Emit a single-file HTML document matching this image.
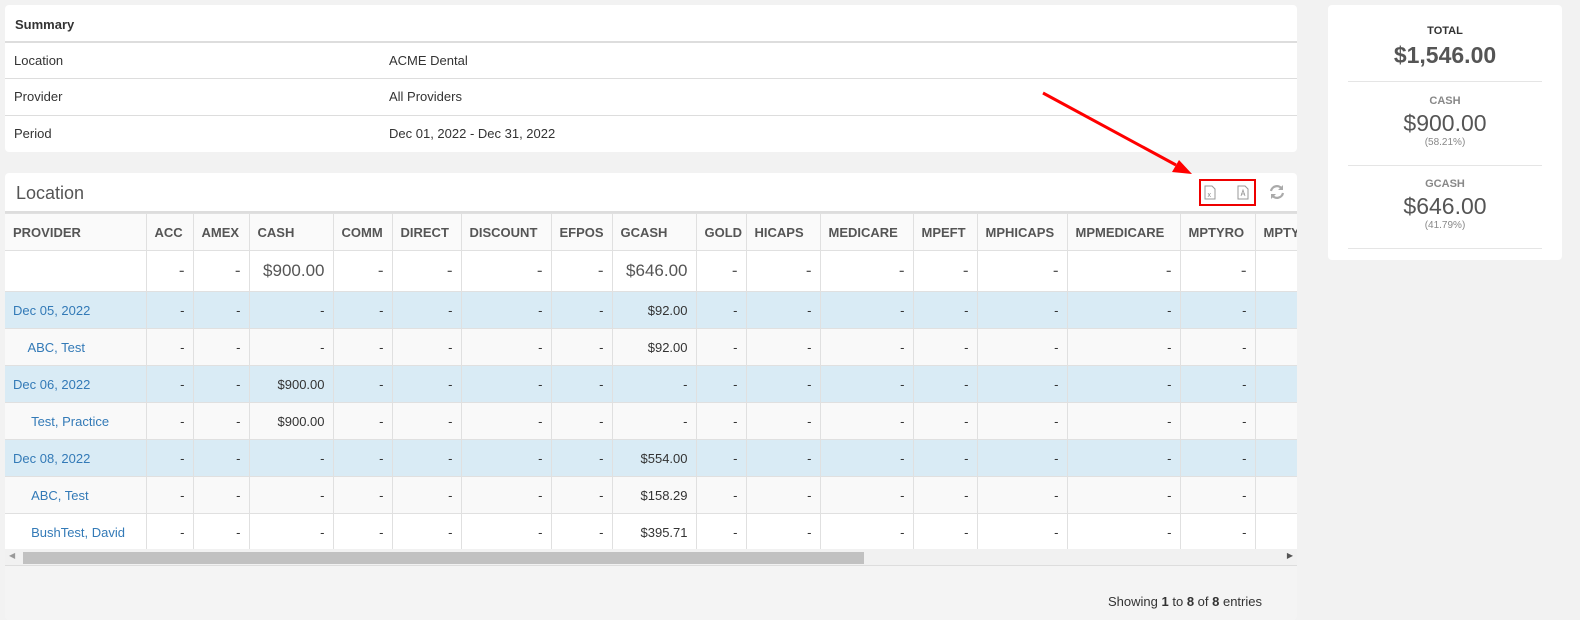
<!DOCTYPE html>
<html><head><style>
*{box-sizing:border-box;margin:0;padding:0}
body{width:1580px;height:620px;background:#f2f2f2;font-family:"Liberation Sans",sans-serif;font-size:13px;color:#333;position:relative;overflow:hidden}
.panel{position:absolute;background:#fff;border-radius:4px}
#sum{left:5px;top:5px;width:1292px;height:147px}
#sum .r{position:absolute;left:0;right:0;height:37px;border-top:1px solid #ddd;line-height:36px}
#sum .r span{position:absolute;left:9px}
#sum .r b{position:absolute;left:384px;font-weight:normal}
#loc{left:5px;top:173px;width:1292px;height:447px;background:#f4f4f4;overflow:hidden}
#loc .hd{height:40px;background:#fff;font-size:18px;color:#555;padding:10px 11px;border-bottom:2px solid #ddd}
table{border-collapse:collapse;table-layout:fixed;position:absolute;top:40px;left:0;width:1340px}
td,th{border:1px solid #e0e0e0;height:37px;padding:0 8px;text-align:right;white-space:nowrap;overflow:hidden}
th{text-align:left;font-weight:bold;color:#555;background:#fafafa;height:37px}
td:first-child,th:first-child{text-align:left;border-left:none}
tr.t td{height:41px;font-size:17px;background:#fff;color:#555}
tr.d td{background:#d9ebf5}
tr.p td{background:#f9f9f9}
tr.w td{background:#fff}
a{color:#337ab7}
.sb{position:absolute;top:376px;left:0;width:1292px;height:17px;background:#f1f1f1;border-bottom:1px solid #ddd}
.sb i{position:absolute;left:18px;top:3px;width:841px;height:12px;background:#c1c1c1}
#card{left:1328px;top:5px;width:234px;height:255px}
.c{position:absolute;left:20px;width:194px;text-align:center;border-bottom:1px solid #e5e5e5}
.lab{font-size:11px;color:#888;font-weight:bold}
</style></head><body>
<div class="panel" id="sum">
<div style="position:absolute;left:10px;top:12px;font-weight:bold">Summary</div>
<div class="r" style="top:36px;border-top:2px solid #ddd"><span>Location</span><b>ACME Dental</b></div>
<div class="r" style="top:73px"><span>Provider</span><b>All Providers</b></div>
<div class="r" style="top:110px"><span>Period</span><b>Dec 01, 2022 - Dec 31, 2022</b></div>
</div>
<div class="panel" id="loc">
<div class="hd">Location</div>
<table>
<colgroup><col style="width:141px"><col style="width:47px"><col style="width:56px"><col style="width:84px"><col style="width:59px"><col style="width:69px"><col style="width:90px"><col style="width:61px"><col style="width:84px"><col style="width:50px"><col style="width:74px"><col style="width:93px"><col style="width:64px"><col style="width:90px"><col style="width:113px"><col style="width:75px"><col style="width:90px"></colgroup>
<tr><th>PROVIDER</th><th>ACC</th><th>AMEX</th><th>CASH</th><th>COMM</th><th>DIRECT</th><th>DISCOUNT</th><th>EFPOS</th><th>GCASH</th><th>GOLD</th><th>HICAPS</th><th>MEDICARE</th><th>MPEFT</th><th>MPHICAPS</th><th>MPMEDICARE</th><th>MPTYRO</th><th>MPTYRO2</th></tr>
<tr class="t"><td></td><td>-</td><td>-</td><td>$900.00</td><td>-</td><td>-</td><td>-</td><td>-</td><td>$646.00</td><td>-</td><td>-</td><td>-</td><td>-</td><td>-</td><td>-</td><td>-</td><td></td></tr>
<tr class="d"><td><a>Dec 05, 2022</a></td><td>-</td><td>-</td><td>-</td><td>-</td><td>-</td><td>-</td><td>-</td><td>$92.00</td><td>-</td><td>-</td><td>-</td><td>-</td><td>-</td><td>-</td><td>-</td><td></td></tr>
<tr class="p"><td>&nbsp;&nbsp;&nbsp;&nbsp;<a>ABC, Test</a></td><td>-</td><td>-</td><td>-</td><td>-</td><td>-</td><td>-</td><td>-</td><td>$92.00</td><td>-</td><td>-</td><td>-</td><td>-</td><td>-</td><td>-</td><td>-</td><td></td></tr>
<tr class="d"><td><a>Dec 06, 2022</a></td><td>-</td><td>-</td><td>$900.00</td><td>-</td><td>-</td><td>-</td><td>-</td><td>-</td><td>-</td><td>-</td><td>-</td><td>-</td><td>-</td><td>-</td><td>-</td><td></td></tr>
<tr class="p"><td>&nbsp;&nbsp;&nbsp;&nbsp;&nbsp;<a>Test, Practice</a></td><td>-</td><td>-</td><td>$900.00</td><td>-</td><td>-</td><td>-</td><td>-</td><td>-</td><td>-</td><td>-</td><td>-</td><td>-</td><td>-</td><td>-</td><td>-</td><td></td></tr>
<tr class="d"><td><a>Dec 08, 2022</a></td><td>-</td><td>-</td><td>-</td><td>-</td><td>-</td><td>-</td><td>-</td><td>$554.00</td><td>-</td><td>-</td><td>-</td><td>-</td><td>-</td><td>-</td><td>-</td><td></td></tr>
<tr class="p"><td>&nbsp;&nbsp;&nbsp;&nbsp;&nbsp;<a>ABC, Test</a></td><td>-</td><td>-</td><td>-</td><td>-</td><td>-</td><td>-</td><td>-</td><td>$158.29</td><td>-</td><td>-</td><td>-</td><td>-</td><td>-</td><td>-</td><td>-</td><td></td></tr>
<tr class="w"><td>&nbsp;&nbsp;&nbsp;&nbsp;&nbsp;<a>BushTest, David</a></td><td>-</td><td>-</td><td>-</td><td>-</td><td>-</td><td>-</td><td>-</td><td>$395.71</td><td>-</td><td>-</td><td>-</td><td>-</td><td>-</td><td>-</td><td>-</td><td></td></tr>
</table>
<div class="sb"><i></i><span style="position:absolute;left:4px;top:2px;font-size:8px;color:#999">◀</span><span style="position:absolute;right:4px;top:2px;font-size:8px;color:#555">▶</span></div>
<div style="position:absolute;right:35px;top:421px;font-size:13px">Showing <b>1</b> to <b>8</b> of <b>8</b> entries</div>
</div>
<div style="position:absolute;left:1199px;top:179px;width:57px;height:27px;border:2px solid #e00;background:#fff"></div>
<svg style="position:absolute;left:1204px;top:185px" width="12" height="15"><path d="M1 1h7l3 3v10H1z" fill="none" stroke="#999"/><text x="3.5" y="12" font-size="7" fill="#888" font-family="Liberation Sans">x</text></svg>
<svg style="position:absolute;left:1237px;top:185px" width="12" height="15"><path d="M1 1h7l3 3v10H1z" fill="none" stroke="#999"/><path d="M4 11l2-6 2 6M4 9h4" stroke="#999" fill="none" stroke-width=".8"/></svg>
<svg style="position:absolute;left:1268px;top:184px" width="18" height="16" viewBox="0 0 18 16"><path d="M3 7a6 6 0 0 1 11-2M15 9a6 6 0 0 1-11 2" stroke="#aaa" stroke-width="2.2" fill="none"/><path d="M15 1v5h-5z M3 15v-5h5z" fill="#aaa"/></svg>
<svg style="position:absolute;left:0;top:0" width="1580" height="620"><line x1="1043" y1="93" x2="1176" y2="165" stroke="#f00" stroke-width="3"/><path d="M1192 174l-20-2 7-12z" fill="#f00"/></svg>
<div class="panel" id="card">
<div class="c" style="top:20px;height:57px"><div class="lab" style="color:#333">TOTAL</div><div style="font-size:23px;font-weight:bold;color:#555;margin-top:5px">$1,546.00</div></div>
<div class="c" style="top:78px;height:83px;padding-top:12px"><div class="lab">CASH</div><div style="font-size:23px;color:#555;margin-top:3px">$900.00</div><div style="font-size:10px;color:#888">(58.21%)</div></div>
<div class="c" style="top:161px;height:83px;padding-top:12px"><div class="lab">GCASH</div><div style="font-size:23px;color:#555;margin-top:3px">$646.00</div><div style="font-size:10px;color:#888">(41.79%)</div></div>
</div>
</body></html>
